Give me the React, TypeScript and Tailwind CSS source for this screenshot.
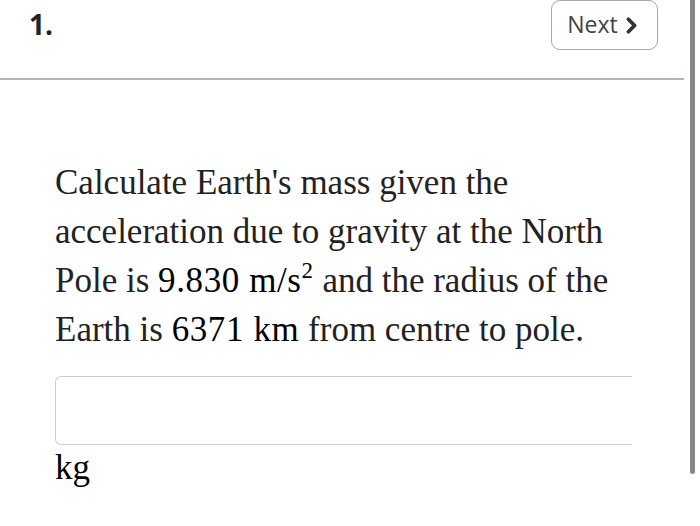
import { ChevronRight } from "lucide-react";

export default function App() {
  return (
    <div className="relative w-[700px] h-[526px] bg-white overflow-hidden">
      {/* Header */}
      <div className="w-[684px]">
        <header className="h-[80px] border-b-2 border-[#b4b4bc] flex items-start justify-between pl-[29px] pr-[26px]">
          <div className="mt-[5px] text-[28px] leading-[38px] font-bold text-[#222] font-['Open_Sans',sans-serif]">1.</div>
          <button className="h-[50px] w-[107px] flex items-center justify-center gap-[1px] border border-[#a8a8ac] rounded-[9px] text-[23px] text-[#444] font-['Open_Sans',sans-serif] pb-[1px] pl-[2px]">
            Next
            <ChevronRight className="w-[25px] h-[25px] text-[#333] mt-[1px]" strokeWidth={3.6} />
          </button>
        </header>
      </div>

      {/* Question */}
      <main className="pl-[55px] pt-[78px]">
        <p className="text-[35px] leading-[49px] text-[#222] whitespace-nowrap font-['Liberation_Serif',serif]">
          Calculate Earth's mass given the
          <br />
          acceleration due to gravity at the North
          <br />
          Pole is <span className="text-black tracking-[0.6px]">9.830 m/s<sup className="text-[23px] top-[-0.62em]">2</sup></span> and the radius of the
          <br />
          Earth is <span className="text-black tracking-[0.6px]">6371 km</span> from centre to pole.
        </p>

        <div className="mt-[22px] w-[577px] h-[69px] border-l-[1.5px] border-y-[1.5px] border-[#cdcdcd] rounded-l-md" />

        <div className="mt-[3px] text-[35px] leading-[40px] text-black font-['Liberation_Serif',serif]">kg</div>
      </main>

      {/* Scrollbar */}
      <div className="absolute right-[5px] top-0 w-[5px] h-[474px] bg-[#888] rounded-b-full" />
    </div>
  );
}
